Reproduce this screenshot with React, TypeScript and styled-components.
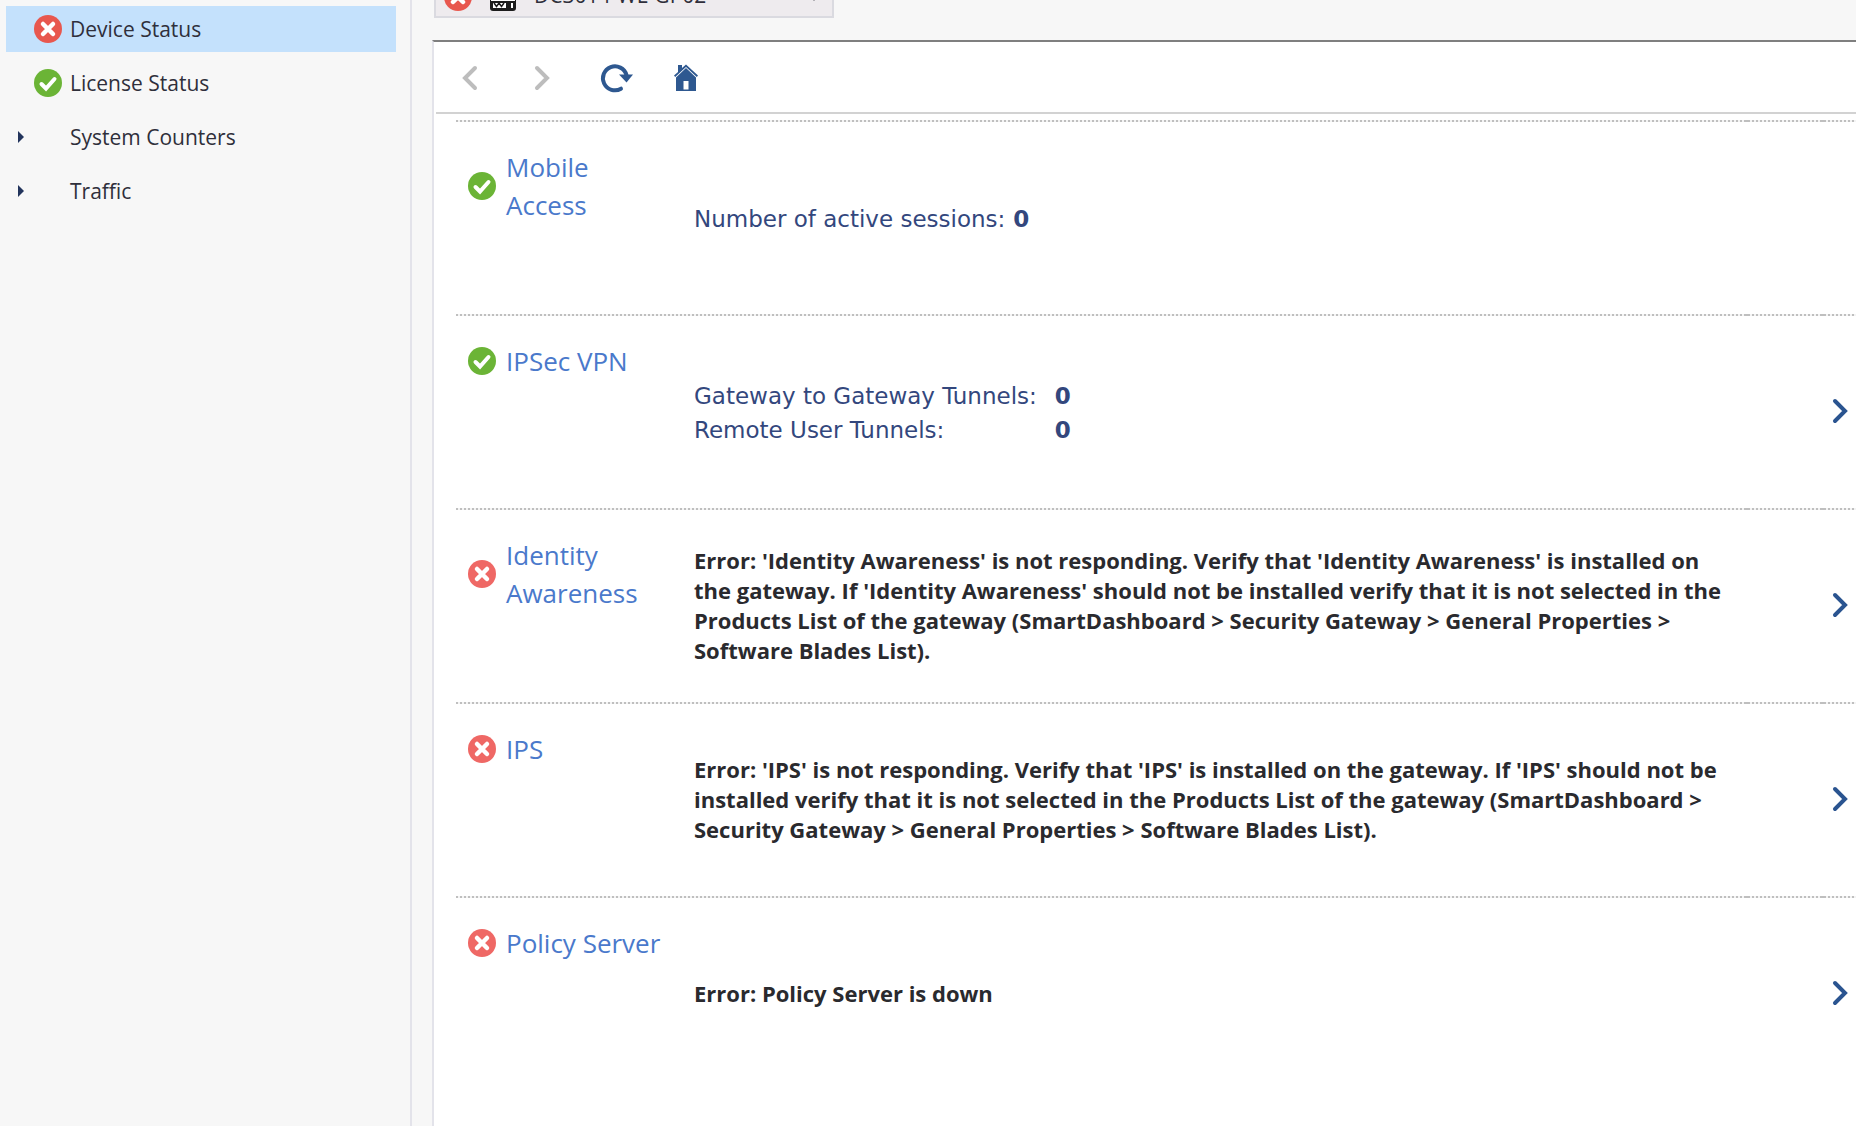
import React from 'react';
import styled, { createGlobalStyle } from 'styled-components';

const Global = createGlobalStyle`
  * { box-sizing: border-box; }
  body { margin: 0; background: #f7f7f7; color: #2e2e3a; font-family: "Noto Sans", sans-serif; }
  button { border: 0; padding: 0; background: none; cursor: pointer; }
`;

const Page = styled.div`
  display: grid;
  grid-template-columns: 412px minmax(0, 1fr);
  min-height: 100vh;
  overflow: hidden;
`;

const Sidebar = styled.nav`
  border-right: 2px solid #e3e3ea;
  padding: 6px 14px 0 6px;
`;

const Tree = styled.ul`
  display: flex;
  flex-direction: column;
  gap: 8px;
  list-style: none;
  margin: 0;
  padding: 0;
`;

const TreeItem = styled.button<{ $active?: boolean }>`
  display: grid;
  grid-template-columns: 16px 36px 1fr;
  align-items: center;
  width: 100%;
  height: 46px;
  padding-left: 12px;
  text-align: left;
  color: #2f2f3b;
  font: 21px/46px "Open Sans", sans-serif;
  background: ${(p) => (p.$active ? '#c4e1fc' : 'transparent')};
`;

const TreeIcon = styled.span`
  display: flex;
`;

const Main = styled.main`
  display: flex;
  flex-direction: column;
  padding-left: 20px;
`;

const Header = styled.header`
  height: 40px;
  display: flex;
  align-items: flex-end;
  padding: 0 0 22px 2px;
`;

const Picker = styled.button`
  display: flex;
  flex: none;
  align-items: center;
  gap: 18px;
  width: 400px;
  height: 42px;
  padding: 0 12px 0 8px;
  border: 2px solid #dadae0;
  background: #eeebee;
  color: #2f2f3b;
  font: 21px/30px "Open Sans", sans-serif;
`;

const PickerName = styled.span`
  flex: 1;
  padding-bottom: 4px;
  text-align: left;
`;

const Panel = styled.section`
  flex: 1;
  background: #fff;
  border-top: 2px solid #7f7f7f;
  border-left: 2px solid #e3e3ea;
`;

const Toolbar = styled.div`
  display: flex;
  align-items: center;
  gap: 40px;
  height: 72px;
  padding: 2px 0 0 18px;
  margin-left: 2px;
  border-bottom: 2px solid #d2d2d2;
`;

const ToolButton = styled.button`
  display: flex;
  justify-content: center;
  width: 32px;
`;

const BladeList = styled.ul`
  list-style: none;
  margin: 6px 0 0 22px;
  padding: 0;
`;

const Blade = styled.li`
  display: grid;
  grid-template-columns: 238px minmax(0, 1fr) 122px;
  height: 194px;
  background:
    linear-gradient(#bfbfbf, #bfbfbf) right 108px top / 4px 2px no-repeat,
    linear-gradient(#bfbfbf, #bfbfbf) right 30px top / 4px 2px no-repeat,
    repeating-linear-gradient(90deg, #bfbfbf 0 2px, #f4f4f4 2px 4px) top / 100% 2px no-repeat;
`;

const BladeTitle = styled.div`
  display: flex;
  align-items: center;
  align-self: start;
  gap: 10px;
  padding: 28px 28px 0 12px;
`;

const BladeLink = styled.a`
  color: #4a79cb;
  text-decoration: none;
  font: 26px/38px "Open Sans", sans-serif;
`;

const BladeBody = styled.div`
  align-self: center;
`;

const ErrorText = styled.p`
  margin: 0;
  color: #2a2a2e;
  font: bold 22px/30px "Open Sans", sans-serif;
`;

const Stats = styled.table<{ $gap: number }>`
  border-collapse: collapse;
  margin-top: 4px;
  color: #33477d;
  font: 23px/34px "DejaVu Sans", Verdana, sans-serif;
  th { padding: 0 ${(p) => p.$gap}px 0 0; font-weight: 400; text-align: left; }
  td { padding: 0; font-weight: 700; }
`;

const OpenButton = styled.button`
  display: flex;
  align-self: center;
  justify-self: end;
  padding-right: 8px;
`;

type State = 'ok' | 'error';

const Badge = styled.svg`
  flex: none;
`;

function StatusIcon({ state, strong }: { state: State; strong?: boolean }) {
  return (
    <Badge width="28" height="28" viewBox="0 0 28 28" fill="none" stroke="#fff" role="img" aria-label={state}>
      <circle cx="14" cy="14" r="14" stroke="none" fill={state === 'ok' ? '#6bb436' : strong ? '#e8574e' : '#ef6865'} />
      {state === 'ok' ? (
        <path d="M7.500 15l4.500 4.500 8.500-9.500" strokeWidth="4" strokeLinecap="round" />
      ) : (
        <path d="M9 9l10 10M19 9l-10 10" strokeWidth="4.500" strokeLinecap="round" />
      )}
    </Badge>
  );
}

function Chevron({ left, color }: { left?: boolean; color: string }) {
  return (
    <svg width="16" height="26" viewBox="0 0 16 26" fill="none" stroke={color} strokeWidth="4" strokeLinecap="round">
      <path d={left ? 'M13 3L3 13l10 10' : 'M3 3l10 10L3 23'} />
    </svg>
  );
}

const Caret = () => (
  <svg width="6" height="12" viewBox="0 0 6 12"><path d="M0 0l6 6-6 6z" fill="#22345c" /></svg>
);

const DropArrow = () => (
  <svg width="12" height="8" viewBox="0 0 12 8"><path d="M0 0h12L6 8z" fill="#55555f" /></svg>
);

const ReloadIcon = () => (
  <svg width="32" height="28" viewBox="-3 0 32 28" overflow="visible">
    <path d="M20 24.700A12 12 0 1 1 25.500 11" fill="none" stroke="#2e5890" strokeWidth="4" strokeLinecap="round" />
    <path d="M18 10.500H32L25.500 18.500z" fill="#2e5890" />
  </svg>
);

const HomeIcon = () => (
  <svg width="24" height="28" viewBox="0 0 24 28">
    <path d="M4 1h4v3l4-3.500 12 11-1.200 1.500L12 3 1.200 13 0 11.500 4 8z" fill="#2e5890" />
    <path fillRule="evenodd" d="M12 4l10 9.500V27H2V13.500zM9.500 17v8.500h5V17z" fill="#2e5890" />
  </svg>
);

const ServerIcon = () => (
  <svg width="26" height="28" viewBox="0 0 26 28">
    <path d="M4 7h18l4 9v9a3 3 0 0 1-3 3H3a3 3 0 0 1-3-3v-9z" fill="#1c1c1c" />
    <path d="M1 16h24v2H1zM3 20h20v5H3z" fill="#fff" />
    <path d="M4 20l2.500 3.500L9 20l2.500 3.500L14 20" fill="none" stroke="#1c1c1c" strokeWidth="1.500" />
    <path d="M16 20h5v5h-5z" fill="#1c1c1c" />
  </svg>
);

const tree: { label: string; state?: State }[] = [
  { label: 'Device Status', state: 'error' },
  { label: 'License Status', state: 'ok' },
  { label: 'System Counters' },
  { label: 'Traffic' },
];

const blades: { name: string; state: State; stats?: [string, string][]; error?: string; open?: boolean }[] = [
  { name: 'Mobile Access', state: 'ok', stats: [['Number of active sessions:', '0']] },
  { name: 'IPSec VPN', state: 'ok', stats: [['Gateway to Gateway Tunnels:', '0'], ['Remote User Tunnels:', '0']], open: true },
  {
    name: 'Identity Awareness', state: 'error', open: true,
    error: "Error: 'Identity Awareness' is not responding. Verify that 'Identity Awareness' is installed on the gateway. If 'Identity Awareness' should not be installed verify that it is not selected in the Products List of the gateway (SmartDashboard > Security Gateway > General Properties > Software Blades List).",
  },
  {
    name: 'IPS', state: 'error', open: true,
    error: "Error: 'IPS' is not responding. Verify that 'IPS' is installed on the gateway. If 'IPS' should not be installed verify that it is not selected in the Products List of the gateway (SmartDashboard > Security Gateway > General Properties > Software Blades List).",
  },
  { name: 'Policy Server', state: 'error', open: true, error: 'Error: Policy Server is down' },
];

export default function App() {
  return (
    <Page>
      <Global />
      <Sidebar>
        <Tree>
          {tree.map((item, i) => (
            <li key={item.label}>
              <TreeItem $active={i === 0}>
                <TreeIcon>{!item.state && <Caret />}</TreeIcon>
                <TreeIcon>{item.state && <StatusIcon state={item.state} strong />}</TreeIcon>
                <span>{item.label}</span>
              </TreeItem>
            </li>
          ))}
        </Tree>
      </Sidebar>
      <Main>
        <Header>
          <Picker>
            <StatusIcon state="error" strong />
            <ServerIcon />
            <PickerName>DC3014-WL-GP02</PickerName>
            <DropArrow />
          </Picker>
        </Header>
        <Panel>
          <Toolbar>
            <ToolButton aria-label="Back"><Chevron left color="#bdbdbd" /></ToolButton>
            <ToolButton aria-label="Forward"><Chevron color="#bdbdbd" /></ToolButton>
            <ToolButton aria-label="Reload"><ReloadIcon /></ToolButton>
            <ToolButton aria-label="Home"><HomeIcon /></ToolButton>
          </Toolbar>
          <BladeList>
            {blades.map((b) => (
              <Blade key={b.name}>
                <BladeTitle>
                  <StatusIcon state={b.state} />
                  <BladeLink href="#">{b.name}</BladeLink>
                </BladeTitle>
                <BladeBody>
                  {b.error && <ErrorText>{b.error}</ErrorText>}
                  {b.stats && (
                    <Stats $gap={b.stats.length > 1 ? 18 : 8}>
                      <tbody>
                        {b.stats.map(([k, v]) => (
                          <tr key={k}><th scope="row">{k}</th><td>{v}</td></tr>
                        ))}
                      </tbody>
                    </Stats>
                  )}
                </BladeBody>
                {b.open && <OpenButton aria-label={'Open ' + b.name}><Chevron color="#2a5490" /></OpenButton>}
              </Blade>
            ))}
          </BladeList>
        </Panel>
      </Main>
    </Page>
  );
}
